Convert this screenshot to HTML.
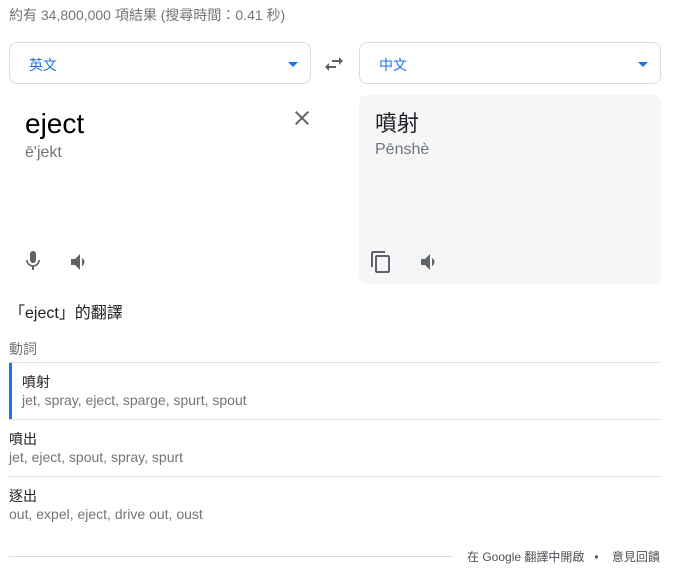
<!DOCTYPE html>
<html><head><meta charset="utf-8"><style>
body{margin:0;width:681px;height:576px;background:#fff;font-family:"Liberation Sans","Noto Sans CJK TC",sans-serif;position:relative;overflow:hidden;color:#202124}
.a{position:absolute;white-space:nowrap}
.sel{position:absolute;top:42px;height:40px;width:300px;border:1px solid #dadce0;border-radius:8px;background:#fff}
.sel span{position:absolute;left:19px;top:12px;font-size:14px;color:#1a73e8}
.tri{position:absolute;right:12px;top:19px;width:0;height:0;border-left:5px solid transparent;border-right:5px solid transparent;border-top:5px solid #1a73e8}
.line{position:absolute;height:1px;background:#e0e0e0}
.g{color:#70757a}
</style></head><body>
<div class="a g" style="left:9px;top:5px;font-size:14px">約有 34,800,000 項結果 (搜尋時間：0.41 秒)</div>
<div class="sel" style="left:9px"><span>英文</span><div class="tri"></div></div>
<div class="sel" style="left:359px"><span>中文</span><div class="tri"></div></div>
<svg class="a" style="left:322px;top:52px" width="24" height="24" viewBox="0 0 24 24"><path fill="#5f6368" d="M6.99 11L3 15l3.99 4v-3H14v-2H6.99v-3zM21 9l-3.99-4v3H10v2h7.01v3L21 9z"/></svg>
<div class="a" style="left:25px;top:108px;font-size:28px;color:#000">eject</div>
<div class="a g" style="left:25px;top:144px;font-size:16px">ē'jekt</div>
<svg class="a" style="left:290px;top:106px" width="24" height="24" viewBox="0 0 24 24"><path fill="#5f6368" d="M19 6.41L17.59 5 12 10.59 6.41 5 5 6.41 10.59 12 5 17.59 6.41 19 12 13.41 17.59 19 19 17.59 13.41 12z"/></svg>
<svg class="a" style="left:21px;top:249px" width="24" height="24" viewBox="0 0 24 24"><path fill="#5f6368" d="M12 14c1.66 0 3-1.34 3-3V5c0-1.66-1.34-3-3-3S9 3.34 9 5v6c0 1.66 1.34 3 3 3zm5.3-3c0 3-2.54 5.1-5.3 5.1S6.7 14 6.7 11H5c0 3.41 2.72 6.23 6 6.72V21h2v-3.28c3.28-.48 6-3.3 6-6.72h-1.7z"/></svg>
<svg class="a" style="left:68px;top:250px" width="24" height="24" viewBox="0 0 24 24"><path fill="#5f6368" d="M3 9v6h4l5 5V4L7 9H3zm13.5 3c0-1.77-1.02-3.29-2.5-4.03v8.05c1.48-.73 2.5-2.25 2.5-4.02z"/></svg>
<div class="a" style="left:359px;top:95px;width:302px;height:189px;background:#f5f6f8;border-radius:8px"></div>
<div class="a" style="left:375px;top:106px;font-size:22px;color:#202124">噴射</div>
<div class="a g" style="left:375px;top:141px;font-size:16px">Pēnshè</div>
<svg class="a" style="left:369px;top:250px" width="24" height="24" viewBox="0 0 24 24"><path fill="#5f6368" d="M16 1H4c-1.1 0-2 .9-2 2v14h2V3h12V1zm3 4H8c-1.1 0-2 .9-2 2v14c0 1.1.9 2 2 2h11c1.1 0 2-.9 2-2V7c0-1.1-.9-2-2-2zm0 16H8V7h11v14z"/></svg>
<svg class="a" style="left:418px;top:250px" width="24" height="24" viewBox="0 0 24 24"><path fill="#5f6368" d="M3 9v6h4l5 5V4L7 9H3zm13.5 3c0-1.77-1.02-3.29-2.5-4.03v8.05c1.48-.73 2.5-2.25 2.5-4.02z"/></svg>
<div class="a" style="left:9px;top:299px;font-size:16px">「eject」的翻譯</div>
<div class="a g" style="left:9px;top:339px;font-size:14px">動詞</div>
<div class="line" style="left:9px;top:362px;width:652px"></div>
<div class="a" style="left:9px;top:363px;width:3px;height:56px;background:#1a73e8"></div>
<div class="a" style="left:22px;top:372px;font-size:14px">噴射</div>
<div class="a g" style="left:22px;top:392px;font-size:14px">jet, spray, eject, sparge, spurt, spout</div>
<div class="line" style="left:9px;top:419px;width:652px"></div>
<div class="a" style="left:9px;top:429px;font-size:14px">噴出</div>
<div class="a g" style="left:9px;top:449px;font-size:14px">jet, eject, spout, spray, spurt</div>
<div class="line" style="left:9px;top:476px;width:652px"></div>
<div class="a" style="left:9px;top:486px;font-size:14px">逐出</div>
<div class="a g" style="left:9px;top:506px;font-size:14px">out, expel, eject, drive out, oust</div>
<div class="line" style="left:9px;top:556px;width:444px;background:#dadce0"></div>
<div class="a" style="left:467px;top:548px;font-size:12px;color:#4d5156">在 Google 翻譯中開啟 &nbsp;&nbsp;•&nbsp;&nbsp;&nbsp; 意見回饋</div>
</body></html>
